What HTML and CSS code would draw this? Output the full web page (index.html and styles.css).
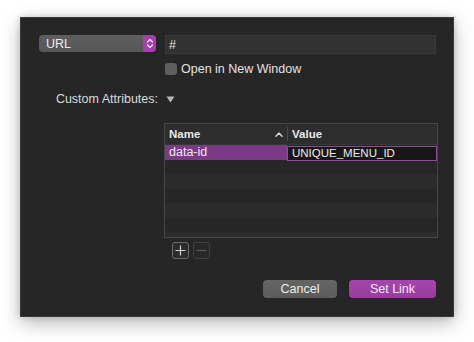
FILE: index.html
```html
<!DOCTYPE html>
<html>
<head>
<meta charset="utf-8">
<link rel="stylesheet" href="styles.css">
</head>
<body>
<div class="panel">
  <div class="row row-top">
    <div class="left">
      <div class="popup">
        <span class="popup-label">URL</span>
        <span class="popup-arrows">
          <svg width="8" height="11" viewBox="0 0 8 11"><path d="M1.5 4 L4 1.5 L6.5 4 M1.5 7 L4 9.5 L6.5 7" fill="none" stroke="#f2e6f4" stroke-width="1.3" stroke-linecap="round" stroke-linejoin="round"/></svg>
        </span>
      </div>
    </div>
    <div class="right">
      <div class="textfield">#</div>
    </div>
  </div>
  <div class="row row-check">
    <div class="left"></div>
    <div class="right check-wrap">
      <span class="checkbox"></span>
      <span class="check-label">Open in New Window</span>
    </div>
  </div>
  <div class="row row-custom">
    <div class="left label-cell">Custom Attributes:</div>
    <div class="right">
      <svg class="disclosure" width="9" height="7" viewBox="0 0 9 7"><path d="M0.5 0.5 L8.5 0.5 L4.5 6.5 Z" fill="#b8b8b8"/></svg>
    </div>
  </div>
  <div class="row row-table">
    <div class="left"></div>
    <div class="right">
      <div class="table">
        <div class="thead">
          <div class="th th-name">Name<span class="sort">
            <svg width="8" height="5" viewBox="0 0 8 5"><path d="M1 4.2 L4 1 L7 4.2" fill="none" stroke="#d8d8d8" stroke-width="1.4" stroke-linecap="round" stroke-linejoin="round"/></svg>
          </span></div>
          <div class="th th-value">Value</div>
        </div>
        <div class="tbody">
          <div class="tr selected">
            <div class="td td-name">data-id</div>
            <div class="td td-value"><div class="edit">UNIQUE_MENU_ID</div></div>
          </div>
          <div class="tr"></div>
          <div class="tr alt"></div>
          <div class="tr"></div>
          <div class="tr alt"></div>
          <div class="tr"></div>
          <div class="tr alt"></div>
        </div>
      </div>
    </div>
  </div>
  <div class="row row-pm">
    <div class="left"></div>
    <div class="right pm">
      <span class="pm-btn plus">
        <svg width="11" height="11" viewBox="0 0 11 11"><path d="M5.5 0.5 V10.5 M0.5 5.5 H10.5" stroke="#d0d0d0" stroke-width="1.2"/></svg>
      </span>
      <span class="pm-btn minus">
        <svg width="11" height="11" viewBox="0 0 11 11"><path d="M0.5 5.5 H10.5" stroke="#5a5a5a" stroke-width="1.2"/></svg>
      </span>
    </div>
  </div>
  <div class="row row-buttons">
    <button class="btn cancel">Cancel</button>
    <button class="btn primary">Set Link</button>
  </div>
</div>
</body>
</html>
```

FILE: styles.css
```css
html, body {
  margin: 0;
  padding: 0;
  background: #ffffff;
}
body {
  width: 474px;
  height: 342px;
  overflow: hidden;
  font-family: "Liberation Sans", Arial, sans-serif;
  font-size: 12.5px;
  color: #dedede;
}
.panel {
  margin: 17px 0 0 20px;
  width: 434px;
  height: 300px;
  box-sizing: border-box;
  background: #262626;
  border: 1px solid #3a3a3a;
  box-shadow: 0 6px 18px rgba(0, 0, 0, 0.28), 0 0 6px rgba(0, 0, 0, 0.15);
  display: flex;
  flex-direction: column;
  padding-top: 17px;
}
.row {
  display: flex;
}
.left {
  width: 143px;
  flex: none;
  box-sizing: border-box;
}
.right {
  flex: 1;
}
.row-top .left {
  padding-left: 18px;
}
.popup {
  width: 117px;
  height: 17px;
  border-radius: 4px;
  background: linear-gradient(#5e5e5e, #575757);
  display: flex;
  align-items: center;
  justify-content: space-between;
  overflow: hidden;
}
.popup-label {
  padding-left: 7px;
  color: #ececec;
  font-size: 12.5px;
}
.popup-arrows {
  width: 13px;
  height: 17px;
  background: #a43fae;
  display: flex;
  align-items: center;
  justify-content: center;
  border-radius: 0 4px 4px 0;
}
.textfield {
  width: 271px;
  height: 19px;
  box-sizing: border-box;
  margin-left: 1px;
  background: #323232;
  border: 1px solid #393939;
  padding-left: 3px;
  line-height: 18px;
  color: #e6e6e6;
  font-size: 12.5px;
}
.row-check {
  margin-top: 8px;
}
.check-wrap {
  display: flex;
  align-items: center;
  height: 13px;
}
.checkbox {
  width: 12px;
  height: 12px;
  border-radius: 3px;
  background: #5e5e5e;
  margin-left: 1px;
  flex: none;
}
.check-label {
  margin-left: 4px;
  color: #e2e2e2;
}
.row-custom {
  margin-top: 16px;
  align-items: center;
  height: 16px;
}
.label-cell {
  text-align: right;
  padding-right: 6px;
  color: #dadada;
}
.disclosure {
  display: block;
  margin-left: 2px;
  margin-top: 1px;
}
.row-table {
  margin-top: 16px;
}
.table {
  width: 274px;
  height: 115px;
  box-sizing: border-box;
  border: 1px solid #474747;
  background: #262626;
  overflow: hidden;
}
.thead {
  display: flex;
  height: 21px;
  background: #2d2d2d;
  border-bottom: 1px solid #363636;
  box-sizing: border-box;
  font-weight: bold;
  font-size: 11.5px;
  color: #e8e8e8;
}
.th {
  display: flex;
  align-items: center;
}
.th-name {
  width: 123px;
  padding-left: 4px;
  box-sizing: border-box;
  justify-content: space-between;
  border-right: 1px solid #4a4a4a;
  margin: 3px 0;
}
.sort {
  display: flex;
  padding-right: 4px;
}
.th-value {
  padding-left: 4px;
}
.tr {
  height: 14.4px;
  display: flex;
}
.tr.alt {
  background: #2b2b2b;
}
.tr.selected {
  height: 15px;
  background: linear-gradient(to right, #7b3a85 0, #7b3a85 122px, #262626 122px);
}
.td-name {
  width: 122px;
  padding-left: 4px;
  box-sizing: border-box;
  line-height: 15px;
  color: #f1e6f3;
}
.td-value {
  flex: 1;
  position: relative;
}
.edit {
  position: absolute;
  left: 0;
  top: 1px;
  right: 0;
  height: 15px;
  box-sizing: border-box;
  background: #171717;
  border: 1px solid #8e4c98;
  padding-left: 4px;
  line-height: 13px;
  color: #ececec;
  font-size: 11.5px;
}
.row-pm {
  margin-top: 4px;
}
.pm {
  display: flex;
  gap: 4px;
  padding-left: 8px;
}
.pm-btn {
  width: 17px;
  height: 17px;
  box-sizing: border-box;
  border-radius: 3px;
  display: flex;
  align-items: center;
  justify-content: center;
}
.plus {
  border: 1px solid #6c6c6c;
  background: #2c2c2c;
}
.minus {
  border: 1px solid #404040;
  background: #282828;
}
.row-buttons {
  margin-top: 21px;
  justify-content: flex-end;
  gap: 12px;
  padding-right: 17px;
}
.btn {
  height: 18px;
  border: none;
  border-radius: 4px;
  font-family: "Liberation Sans", Arial, sans-serif;
  font-size: 12.5px;
  padding: 0;
  line-height: 18px;
}
.cancel {
  width: 74px;
  background: linear-gradient(#656565, #5c5c5c);
  color: #ededed;
}
.primary {
  width: 87px;
  background: linear-gradient(#a546ad, #983d9f);
  color: #f4eaf5;
}
```
